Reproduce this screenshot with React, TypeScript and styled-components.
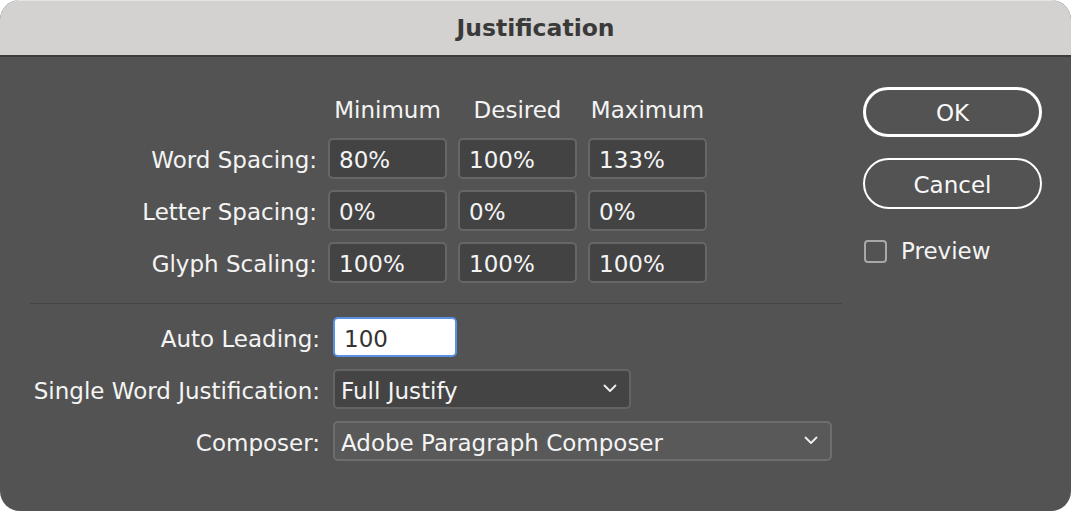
import React from "react";
import styled, { createGlobalStyle } from "styled-components";

const Global = createGlobalStyle`
  html, body { margin: 0; padding: 0; background: #ffffff; }
  body { font-family: "DejaVu Sans", "Liberation Sans", sans-serif; }
  * { box-sizing: border-box; }
`;

const Window = styled.div`
  width: 1071px;
  height: 511px;
  border-radius: 20px;
  overflow: hidden;
  background: #535353;
  display: flex;
  flex-direction: column;
`;

const TitleBar = styled.div`
  height: 57px;
  flex: none;
  background: #d3d2d0;
  border-top: 1px solid #e6e5e3;
  border-bottom: 2px solid #3c3c3c;
  display: flex;
  align-items: center;
  justify-content: center;
  padding-bottom: 1px;
  font-weight: bold;
  font-size: 23.5px;
  color: #3a3a3a;
`;

const Body = styled.div`
  flex: 1;
  display: flex;
  color: #f4f4f4;
  font-size: 23px;
`;

const LeftPane = styled.div`
  width: 812px;
  margin-left: 30px;
  padding-top: 36px;
  display: flex;
  flex-direction: column;
`;

const SpacingGrid = styled.div`
  display: grid;
  grid-template-columns: 287px 119px 119px 119px;
  column-gap: 11px;
  row-gap: 11px;
  align-items: center;
`;

const ColHead = styled.div`
  text-align: center;
  line-height: 30px;
  padding-top: 2px;
  margin-bottom: 2px;
`;

const Label = styled.div`
  text-align: right;
  white-space: nowrap;
  padding-top: 3px;
`;

const Field = styled.div`
  height: 41px;
  background: #434343;
  border: 2px solid #666666;
  border-radius: 5px;
  display: flex;
  align-items: center;
  padding-left: 9px;
  padding-top: 3px;
`;

const Separator = styled.div`
  height: 1px;
  background: #454545;
  margin: 20px 0 13px 0;
`;

const OptionsGrid = styled.div`
  display: grid;
  grid-template-columns: 290px auto;
  column-gap: 13px;
  row-gap: 12px;
  align-items: center;
  justify-items: start;
`;

const OptLabel = styled(Label)`
  justify-self: end;
`;

const LeadingInput = styled.div`
  width: 124px;
  height: 40px;
  background: #ffffff;
  border: 2px solid #5a91e2;
  border-radius: 5px;
  color: #333333;
  display: flex;
  align-items: center;
  padding-left: 9px;
  padding-top: 3px;
`;

const Select = styled.div<{ $w: number; $light?: boolean }>`
  width: ${(p) => p.$w}px;
  height: 40px;
  background: ${(p) => (p.$light ? "#595959" : "#444444")};
  border: 2px solid ${(p) => (p.$light ? "#6e6e6e" : "#646464")};
  border-radius: 5px;
  display: flex;
  align-items: center;
  justify-content: space-between;
  padding: 3px 12px 0 6px;
  white-space: nowrap;
`;

const ChevronBox = styled.span`
  display: flex;
  margin-top: -4px;
`;

const Chevron = () => (
  <ChevronBox>
    <svg width="14" height="9" viewBox="0 0 14 9">
      <path d="M1.5 1.5 L7 7 L12.5 1.5" fill="none" stroke="#f0f0f0" strokeWidth="1.8" strokeLinecap="round" strokeLinejoin="round" />
    </svg>
  </ChevronBox>
);

const RightPane = styled.div`
  margin-left: 21px;
  padding-top: 30px;
  display: flex;
  flex-direction: column;
`;

const PillButton = styled.div<{ $primary?: boolean }>`
  width: 179px;
  height: ${(p) => (p.$primary ? 50 : 51)}px;
  border: ${(p) => (p.$primary ? 3 : 2)}px solid #ffffff;
  border-radius: 26px;
  display: flex;
  align-items: center;
  justify-content: center;
  color: #f8f8f8;
  font-size: 23px;
  padding-top: 2px;
  margin-bottom: ${(p) => (p.$primary ? 21 : 29)}px;
`;

const CheckRow = styled.div`
  display: flex;
  align-items: center;
  gap: 14px;
  padding-left: 1px;
`;

const CheckBox = styled.div`
  width: 23px;
  height: 23px;
  border: 2px solid #a8a8a8;
  border-radius: 4px;
`;

export default function App() {
  const rows = [
    { label: "Word Spacing:", vals: ["80%", "100%", "133%"] },
    { label: "Letter Spacing:", vals: ["0%", "0%", "0%"] },
    { label: "Glyph Scaling:", vals: ["100%", "100%", "100%"] },
  ];
  return (
    <>
      <Global />
      <Window>
        <TitleBar>Justification</TitleBar>
        <Body>
          <LeftPane>
            <SpacingGrid>
              <div />
              <ColHead>Minimum</ColHead>
              <ColHead>Desired</ColHead>
              <ColHead>Maximum</ColHead>
              {rows.map((r) => (
                <React.Fragment key={r.label}>
                  <Label>{r.label}</Label>
                  {r.vals.map((v, i) => (
                    <Field key={i}>{v}</Field>
                  ))}
                </React.Fragment>
              ))}
            </SpacingGrid>
            <Separator />
            <OptionsGrid>
              <OptLabel>Auto Leading:</OptLabel>
              <LeadingInput>100</LeadingInput>
              <OptLabel>Single Word Justification:</OptLabel>
              <Select $w={298}>
                <span>Full Justify</span>
                <Chevron />
              </Select>
              <OptLabel>Composer:</OptLabel>
              <Select $w={499} $light>
                <span>Adobe Paragraph Composer</span>
                <Chevron />
              </Select>
            </OptionsGrid>
          </LeftPane>
          <RightPane>
            <PillButton $primary>OK</PillButton>
            <PillButton>Cancel</PillButton>
            <CheckRow>
              <CheckBox />
              <span>Preview</span>
            </CheckRow>
          </RightPane>
        </Body>
      </Window>
    </>
  );
}
